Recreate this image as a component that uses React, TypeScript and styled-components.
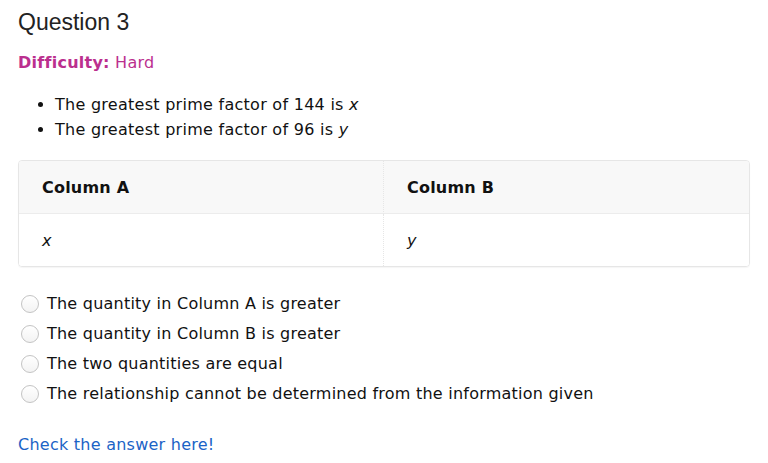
import React from "react";
import styled, { createGlobalStyle } from "styled-components";

const GlobalStyle = createGlobalStyle`
    html, body {
        margin: 0;
        padding: 0;
        background: #fff;
    }
    body {
        font-family: "DejaVu Sans", Verdana, sans-serif;
        color: #111;
    }
`;

const Page = styled.div`
    padding: 6px 18px 0 18px;
    width: 732px;
`;

const Title = styled.h1`
    font-family: "Liberation Sans", Arial, sans-serif;
    font-weight: 400;
    font-size: 23px;
    line-height: 32px;
    margin: 0 0 14px 0;
    color: #222;
`;

const Difficulty = styled.div`
    font-size: 16px;
    line-height: 22px;
    letter-spacing: 0.25px;
    color: #bb2f8e;
    margin-bottom: 18px;
    b {
        font-weight: 700;
    }
`;

const Facts = styled.ul`
    margin: 0 0 18px 0;
    padding-left: 37px;
    font-size: 16px;
    line-height: 25px;
    letter-spacing: 0.27px;
    i {
        font-style: italic;
    }
`;

const Table = styled.div`
    display: grid;
    grid-template-columns: 365px 1fr;
    border: 1px solid #e6e6e6;
    border-radius: 4px;
    overflow: hidden;
    box-shadow: 0 1px 1px rgba(0, 0, 0, 0.04);
`;

const Cell = styled.div<{ head?: boolean; last?: boolean; bottom?: boolean }>`
    height: 52px;
    display: flex;
    align-items: center;
    padding: 0 23px;
    font-size: 16px;
    letter-spacing: 0.2px;
    font-weight: ${({ head }) => (head ? 700 : 400)};
    font-style: ${({ head }) => (head ? "normal" : "italic")};
    background: ${({ head }) => (head ? "#f8f8f8" : "#fff")};
    border-right: ${({ last }) => (last ? "none" : "1px dotted #e6e6e6")};
    border-bottom: ${({ bottom }) => (bottom ? "none" : "1px solid #ececec")};
`;

const Options = styled.div`
    margin-top: 25px;
    display: flex;
    flex-direction: column;
    gap: 6px;
`;

const Option = styled.label`
    display: flex;
    align-items: center;
    gap: 8px;
    font-size: 16px;
    line-height: 24px;
    letter-spacing: 0.23px;
    cursor: pointer;
`;

const Radio = styled.span`
    width: 18px;
    height: 18px;
    margin-left: 3px;
    border-radius: 50%;
    border: 1px solid #c4c4c4;
    background: linear-gradient(#fff, #f3f3f3);
    box-sizing: border-box;
    flex-shrink: 0;
`;

const Link = styled.a`
    display: inline-block;
    margin-top: 29px;
    font-size: 16px;
    letter-spacing: 0.25px;
    color: #1b63c6;
    text-decoration: none;
`;

const options = [
    "The quantity in Column A is greater",
    "The quantity in Column B is greater",
    "The two quantities are equal",
    "The relationship cannot be determined from the information given",
];

export default function App() {
    return (
        <>
            <GlobalStyle />
            <Page>
                <Title>Question 3</Title>
                <Difficulty>
                    <b>Difficulty:</b> Hard
                </Difficulty>
                <Facts>
                    <li>
                        The greatest prime factor of 144 is <i>x</i>
                    </li>
                    <li>
                        The greatest prime factor of 96 is <i>y</i>
                    </li>
                </Facts>
                <Table>
                    <Cell head>Column A</Cell>
                    <Cell head last>
                        Column B
                    </Cell>
                    <Cell bottom>x</Cell>
                    <Cell bottom last>
                        y
                    </Cell>
                </Table>
                <Options>
                    {options.map((o) => (
                        <Option key={o}>
                            <Radio />
                            {o}
                        </Option>
                    ))}
                </Options>
                <Link href="#">Check the answer here!</Link>
            </Page>
        </>
    );
}
